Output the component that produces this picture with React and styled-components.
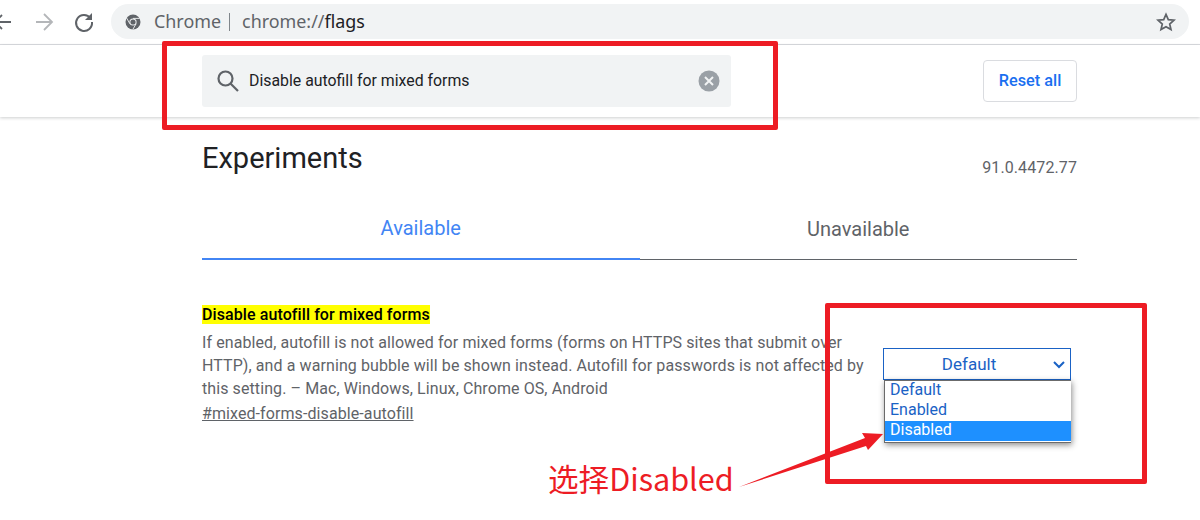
import React from 'react';
import styled, { createGlobalStyle } from 'styled-components';

const GlobalStyle = createGlobalStyle`
  html, body {
    margin: 0;
    padding: 0;
    background: #fff;
    overflow: hidden;
  }
  body {
    font-family: Roboto, "Liberation Sans", sans-serif;
  }
`;

const Page = styled.div`
  position: relative;
  width: 1200px;
  height: 520px;
  overflow: hidden;
`;

const Toolbar = styled.div`
  height: 43px;
  border-bottom: 1px solid #dadce0;
  display: flex;
  align-items: center;
  padding: 0 11px 1px 0;
`;

const NavIcons = styled.div`
  width: 111px;
  flex: none;
  display: flex;
  align-items: center;
  gap: 16.5px;
  margin-left: -9px;
`;

const AddressBar = styled.div`
  flex: 1;
  height: 35px;
  margin-left: 9px;
  border-radius: 18px;
  background: #f1f3f4;
  display: flex;
  align-items: center;
  padding: 0 13px 0 14px;
  font-family: "Noto Sans", sans-serif;
  font-size: 17.9px;
`;

const SiteName = styled.span`
  margin-left: 13px;
  padding-bottom: 2px;
  color: #5f6368;
`;

const Divider = styled.span`
  width: 1px;
  height: 18px;
  margin: 0 12px 0 8px;
  background: #80868b;
`;

const Scheme = styled.span`
  padding-bottom: 2px;
  color: #5f6368;
`;

const Host = styled.span`
  padding-bottom: 2px;
  color: #202124;
`;

const Star = styled.div`
  margin-left: auto;
  display: flex;
`;

const Header = styled.header`
  height: 72px;
  padding: 0 123px 0 202px;
  display: flex;
  align-items: center;
  justify-content: space-between;
  box-shadow: 0 1px 3px rgba(60, 64, 67, 0.25);
`;

const SearchBox = styled.div`
  width: 529px;
  height: 52px;
  box-sizing: border-box;
  padding: 0 11px 0 14px;
  border-radius: 3px;
  background: #f1f3f4;
  display: flex;
  align-items: center;
  font-size: 15.85px;
  color: #202124;
`;

const SearchText = styled.span`
  margin-left: 9px;
  padding-bottom: 2px;
  flex: 1;
`;

const ResetButton = styled.button`
  width: 94px;
  height: 42px;
  padding: 0 0 2px;
  background: #fff;
  border: 1px solid #dadce0;
  border-radius: 4px;
  color: #1a6ff0;
  font-family: inherit;
  font-size: 16.3px;
  font-weight: 500;
`;

const Main = styled.main`
  width: 875px;
  margin-left: 202px;
`;

const TitleRow = styled.div`
  display: flex;
  justify-content: space-between;
  padding-top: 23px;
  height: 60px;
`;

const Title = styled.h1`
  margin: 0;
  font-size: 29px;
  font-weight: 400;
  line-height: 36px;
  color: #202124;
`;

const Version = styled.span`
  margin-top: 18px;
  font-size: 16px;
  line-height: 20px;
  color: #5f6368;
  letter-spacing: 0.1px;
`;

const Tabs = styled.div`
  display: flex;
  height: 59px;
`;

const Tab = styled.div`
  width: 50%;
  height: 60px;
  box-sizing: border-box;
  padding-top: ${p => (p.$active ? '16px' : '17px')};
  text-align: center;
  font-size: 20px;
  line-height: 24px;
  color: ${p => (p.$active ? '#4285f4' : '#5f6368')};
  border-bottom: ${p => (p.$active ? '2px solid #4285f4' : '1px solid #5f6368')};
`;

const FlagRow = styled.section`
  display: flex;
  justify-content: space-between;
  padding-top: 46px;
`;

const FlagInfo = styled.div`
  width: 672px;
`;

const FlagTitle = styled.mark`
  display: block;
  width: fit-content;
  height: 19px;
  background: #ffff00;
  color: #000;
  font-size: 16px;
  font-weight: 500;
  line-height: 19px;
  letter-spacing: 0.09px;
`;

const FlagDescription = styled.p`
  margin: 7px 0 0;
  font-size: 16px;
  line-height: 23px;
  color: #5f6368;
  letter-spacing: 0.09px;
`;

const FlagLink = styled.a`
  display: block;
  margin-top: 2px;
  font-size: 16px;
  line-height: 23px;
  color: #5f6368;
  text-decoration: underline;
  letter-spacing: 0.09px;
`;

const SelectArea = styled.div`
  position: relative;
  width: 188px;
  margin: 43px 6px 0 0;
`;

const Select = styled.div`
  position: relative;
  height: 32px;
  box-sizing: border-box;
  padding-right: 16px;
  border: 1px solid #1a62c5;
  text-align: center;
  font-size: 17px;
  line-height: 30px;
  color: #1a62c5;
`;

const Chevron = styled.span`
  position: absolute;
  right: 4px;
  top: 9px;
  display: flex;
`;

const Dropdown = styled.ul`
  position: absolute;
  left: 1px;
  top: 32px;
  width: 187px;
  height: 63px;
  box-sizing: border-box;
  margin: 0;
  padding: 0 0 2px;
  list-style: none;
  background: #fff;
  border: 1px solid #6b6b6b;
  border-right: 0;
  box-shadow: 1px 2px 6px rgba(0, 0, 0, 0.45);
  z-index: 1;
`;

const Option = styled.li`
  height: 20px;
  padding-left: 5px;
  font-size: 16px;
  line-height: 17px;
  color: ${p => (p.$selected ? '#fff' : '#1a62c5')};
  background: ${p => (p.$selected ? '#1e90ff' : 'transparent')};
`;

const RedFrame = styled.div`
  position: absolute;
  left: ${p => p.$x}px;
  top: ${p => p.$y}px;
  width: ${p => p.$w}px;
  height: ${p => p.$h}px;
  box-sizing: border-box;
  border: 5px solid #ed1c24;
  border-radius: 2px;
  z-index: 2;
`;

const Callout = styled.div`
  position: absolute;
  left: 548px;
  top: 457px;
  font-family: "Noto Sans CJK SC", "Noto Sans", sans-serif;
  font-size: 30.6px;
  line-height: 42px;
  color: #ed1c24;
  z-index: 2;
`;

const Arrow = styled.svg`
  position: absolute;
  left: 730px;
  top: 425px;
  z-index: 3;
`;

function App() {
  return (
    <Page>
      <GlobalStyle />
      <Toolbar>
        <NavIcons>
          <svg width="24" height="24" viewBox="0 0 24 24" fill="none" stroke="#5f6368" strokeWidth="1.8">
            <path d="M20 12H4M11 5l-7 7 7 7" />
          </svg>
          <svg width="24" height="24" viewBox="0 0 24 24" fill="none" stroke="#b4b6b9" strokeWidth="1.8">
            <path d="M4 12h16M12 4l8 8-8 8" />
          </svg>
          <svg width="24" height="24" viewBox="0 0 24 24" fill="none" stroke="#5f6368" strokeWidth="2">
            <path d="M18.5 8.2A8 8 0 1 0 20 12" />
            <path d="M20 3v7h-7z" fill="#5f6368" stroke="none" />
          </svg>
        </NavIcons>
        <AddressBar>
          <svg width="16" height="16" viewBox="0 0 16 16">
            <circle cx="8" cy="8" r="7.5" fill="#5f6368" />
            <circle cx="8" cy="8" r="3.6" fill="#f1f3f4" />
            <circle cx="8" cy="8" r="2.6" fill="#5f6368" />
            <path d="M8 4.4h6.6M4.9 9.8 1.6 4M11.1 9.8 7.8 15.5" stroke="#f1f3f4" strokeWidth="0.9" />
          </svg>
          <SiteName>Chrome</SiteName>
          <Divider />
          <Scheme>chrome://</Scheme>
          <Host>flags</Host>
          <Star>
            <svg width="20" height="20" viewBox="0 0 20 20" fill="none" stroke="#5f6368" strokeWidth="1.7">
              <path d="M10 2.4l2.3 5.3 5.7.5-4.3 3.8 1.3 5.6L10 14.7l-5 2.9 1.3-5.6L2 8.2l5.7-.5z" />
            </svg>
          </Star>
        </AddressBar>
      </Toolbar>
      <Header>
        <SearchBox>
          <svg width="24" height="24" viewBox="0 0 24 24" fill="none" stroke="#5f6368" strokeWidth="2.2">
            <circle cx="9.5" cy="9.5" r="7" />
            <path d="M14.5 14.5l7.5 7.5" />
          </svg>
          <SearchText>Disable autofill for mixed forms</SearchText>
          <svg width="22" height="22" viewBox="0 0 22 22">
            <circle cx="11" cy="11" r="10.5" fill="#9aa0a6" />
            <path d="M7 7l8 8M15 7l-8 8" stroke="#f1f3f4" strokeWidth="2" />
          </svg>
        </SearchBox>
        <ResetButton>Reset all</ResetButton>
      </Header>
      <Main>
        <TitleRow>
          <Title>Experiments</Title>
          <Version>91.0.4472.77</Version>
        </TitleRow>
        <Tabs>
          <Tab $active>Available</Tab>
          <Tab>Unavailable</Tab>
        </Tabs>
        <FlagRow>
          <FlagInfo>
            <FlagTitle>Disable autofill for mixed forms</FlagTitle>
            <FlagDescription>
              If enabled, autofill is not allowed for mixed forms (forms on HTTPS sites that submit over
              HTTP), and a warning bubble will be shown instead. Autofill for passwords is not affected by
              this setting. – Mac, Windows, Linux, Chrome OS, Android
            </FlagDescription>
            <FlagLink>#mixed-forms-disable-autofill</FlagLink>
          </FlagInfo>
          <SelectArea>
            <Select>
              Default
              <Chevron>
                <svg width="14" height="14" viewBox="0 0 14 14" fill="none" stroke="#1a62c5" strokeWidth="2">
                  <path d="M2 4l5 5 5-5" />
                </svg>
              </Chevron>
            </Select>
            <Dropdown>
              <Option>Default</Option>
              <Option>Enabled</Option>
              <Option $selected>Disabled</Option>
            </Dropdown>
          </SelectArea>
        </FlagRow>
      </Main>
      <RedFrame $x={162} $y={41} $w={616} $h={89} />
      <RedFrame $x={825} $y={303} $w={322} $h={181} />
      <Callout>选择Disabled</Callout>
      <Arrow width="160" height="70" viewBox="0 0 160 70">
        <path d="M9 62 L135 13 L132 8 L153 9 L138 25 L136 21 Z" fill="#ed1c24" />
      </Arrow>
    </Page>
  );
}

export default App;
